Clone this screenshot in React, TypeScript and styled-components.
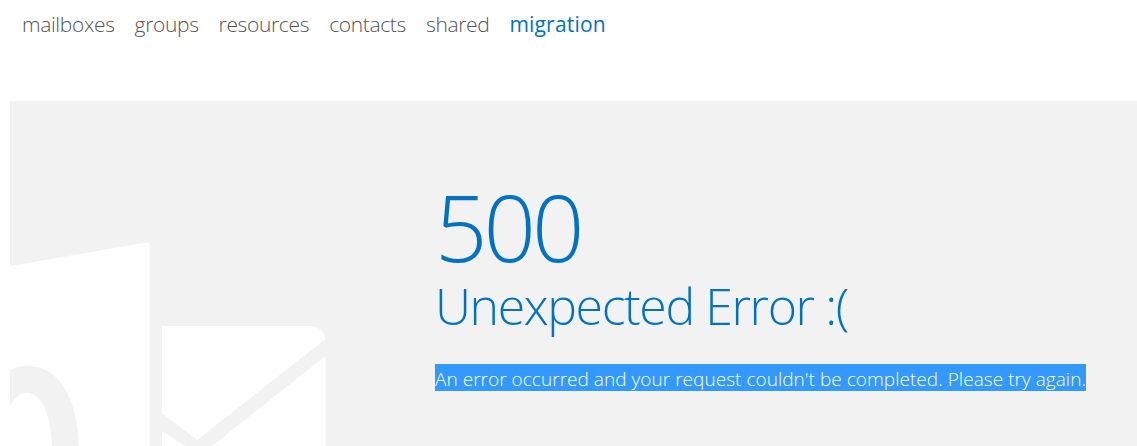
import React from "react"
import styled, { createGlobalStyle } from "styled-components"

const GlobalStyle = createGlobalStyle`
  html, body {
    margin: 0;
    padding: 0;
    height: 100%;
    overflow: hidden;
    background: #fff;
    font-family: "Open Sans", "Liberation Sans", sans-serif;
  }
  #root {
    height: 100%;
  }
`

const Page = styled.div`
  display: flex;
  flex-direction: column;
  height: 100%;
`

const Nav = styled.nav`
  display: flex;
  gap: 20px;
  height: 101px;
  padding: 9px 0 0 22px;
  box-sizing: border-box;
`

const NavItem = styled.a<{ $active?: boolean }>`
  font-size: 21px;
  line-height: 30px;
  font-weight: ${(p) => (p.$active ? 400 : 300)};
  color: ${(p) => (p.$active ? "#0072c6" : "#555")};
  letter-spacing: ${(p) => (p.$active ? "0.2px" : "-0.35px")};
  cursor: pointer;
`

const Panel = styled.main`
  position: relative;
  flex: 1;
  margin-left: 10px;
  background: #f2f2f2;
  overflow: hidden;
  padding: 72px 0 0 425px;
`

const Watermark = styled.svg`
  position: absolute;
  left: 0;
  top: 0;
  width: 330px;
  height: 345px;
`

const Message = styled.div`
  position: relative;
  display: flex;
  flex-direction: column;
`

const Code = styled.h1`
  margin: 0;
  font-size: 92px;
  line-height: 108px;
  font-weight: 300;
  color: #0072c6;
  letter-spacing: -4px;
`

const Title = styled.h2`
  margin: 0;
  font-size: 50px;
  line-height: 50px;
  font-weight: 300;
  color: #0072c6;
  letter-spacing: -1.4px;
`

const Detail = styled.p`
  margin: 33px 0 0;
  font-size: 19px;
  line-height: 23px;
`

const Selected = styled.span`
  display: inline-block;
  padding-top: 4px;
  background: #3399ff;
  color: #fff;
  font-weight: 300;
  letter-spacing: 0.04px;
`

const links = ["mailboxes", "groups", "resources", "contacts", "shared"]

export default function App() {
  return (
    <Page>
      <GlobalStyle />
      <Nav>
        {links.map((link) => (
          <NavItem key={link}>{link}</NavItem>
        ))}
        <NavItem $active>migration</NavItem>
      </Nav>
      <Panel>
        <Watermark viewBox="0 0 330 345">
          <path
            fill="#fff"
            fillRule="evenodd"
            d="M0 165 L139.5 141 V345 H0 Z M17 265 C-22 265 -35 310 -35 350 C-35 395 -22 435 17 435 C56 435 69 395 69 350 C69 310 56 265 17 265 Z M17 292 C34 292 42 320 42 350 C42 380 34 408 17 408 C0 408 -8 380 -8 350 C-8 320 0 292 17 292 Z"
          />
          <path
            fill="#fff"
            d="M152 225 H302 Q313 226 315.5 238 L187 339 L152 312 Z M315.5 255 V345 H202 Z M152 330 L175 345 H152 Z"
          />
        </Watermark>
        <Message>
          <Code>500</Code>
          <Title>Unexpected Error :(</Title>
          <Detail>
            <Selected>An error occurred and your request couldn't be completed. Please try again.</Selected>
          </Detail>
        </Message>
      </Panel>
    </Page>
  )
}
